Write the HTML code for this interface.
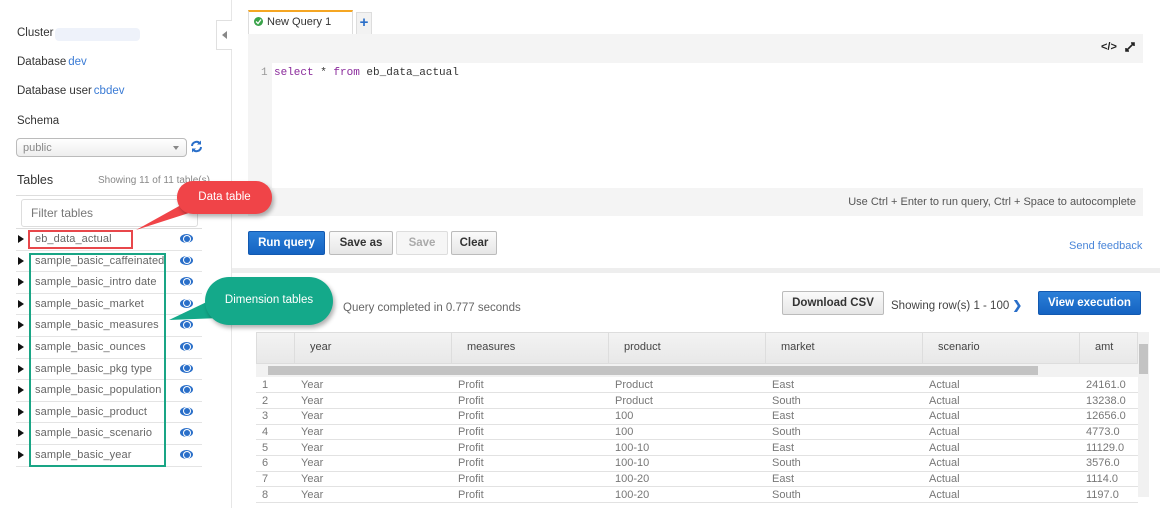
<!DOCTYPE html>
<html><head><meta charset="utf-8"><style>
*{box-sizing:border-box;margin:0;padding:0}
body{width:1160px;height:508px;overflow:hidden;background:#fff;font-family:"Liberation Sans",sans-serif;font-size:12px;color:#333;position:relative}
.a{position:absolute}
.lbl{font-size:11.5px;color:#333}
.lnk{color:#3a7bd5;margin-left:2px}
.row{position:absolute;left:16px;width:186px;height:21.6px;border-bottom:1px solid #e4e4e4}
.row .t{position:absolute;left:19px;top:4px;color:#666;font-size:11px;letter-spacing:0.1px}
.row .tri{position:absolute;left:2px;top:6px;width:0;height:0;border-left:6px solid #111;border-top:4.5px solid transparent;border-bottom:4.5px solid transparent}
.eye{position:absolute;left:164px;top:5px;width:13px;height:9px;border-radius:50%;background:#2a6fc9}
.eye:after{content:"";position:absolute;left:3.5px;top:1.5px;width:6px;height:6px;border-radius:50%;background:#2a6fc9;box-shadow:0 0 0 1px #fff}
.btn{position:absolute;height:24px;border:1px solid #bbb;border-radius:2px;background:linear-gradient(#fafafa,#e6e6e6);font-weight:bold;font-size:11.5px;text-align:center;line-height:22px;color:#333}
.blue{background:linear-gradient(#2b7fd8,#1563c2);border-color:#1259b0;color:#fff}
table{border-collapse:collapse;position:absolute;left:256px;top:377px;width:882px;font-size:11px;color:#777}
td{height:15.7px;border-bottom:1px solid #e2e2e2;padding:0 0 0 6px;white-space:nowrap;overflow:hidden}
.hc{position:absolute;top:332px;height:31px;border-right:1px solid #ddd;font-size:11px;color:#444;padding:9px 0 0 15px}
</style></head><body>
<div class="a lbl" style="left:17px;top:27px">Cluster</div>
<div class="a" style="left:55px;top:28px;width:85px;height:13px;background:#eef2fa;border-radius:4px"></div>
<div class="a lbl" style="left:17px;top:56px">Database<span class="lnk">dev</span></div>
<div class="a lbl" style="left:17px;top:85px">Database user<span class="lnk">cbdev</span></div>
<div class="a lbl" style="left:17px;top:115px">Schema</div>
<div class="a" style="left:16px;top:138px;width:171px;height:19px;border:1px solid #bbb;border-radius:4px;background:linear-gradient(#fff,#eee);color:#888;font-size:11px;padding:3px 0 0 6px">public<span style="position:absolute;right:7px;top:7px;border-top:4px solid #888;border-left:3px solid transparent;border-right:3px solid transparent"></span></div>
<svg class="a" style="left:190px;top:140px" width="13" height="13" viewBox="0 0 13 13"><path d="M2 6a4.5 4.5 0 0 1 8-2.5M11 7a4.5 4.5 0 0 1-8 2.5" stroke="#2a6fc9" stroke-width="2" fill="none"/><path d="M11 0.5v4h-4z M2 12.5v-4h4z" fill="#2a6fc9"/></svg>
<div class="a" style="left:17px;top:173px;font-size:12.5px">Tables</div>
<div class="a" style="left:98px;top:175px;font-size:10px;color:#888">Showing 11 of 11 table(s)</div>
<div class="a" style="left:16px;top:195px;width:186px;height:34px;border-top:1px solid #ddd;border-bottom:1px solid #ddd"></div>
<div class="a" style="left:21px;top:199px;width:177px;height:28px;border:1px solid #ddd;border-radius:3px;background:#fff;color:#777;padding:6px 0 0 9px;font-size:12px">Filter tables</div>
<div class="row" style="top:229px"><span class="tri"></span><span class="t">eb_data_actual</span><span class="eye"></span></div>
<div class="row" style="top:250.6px"><span class="tri"></span><span class="t">sample_basic_caffeinated</span><span class="eye"></span></div>
<div class="row" style="top:272.2px"><span class="tri"></span><span class="t">sample_basic_intro date</span><span class="eye"></span></div>
<div class="row" style="top:293.8px"><span class="tri"></span><span class="t">sample_basic_market</span><span class="eye"></span></div>
<div class="row" style="top:315.4px"><span class="tri"></span><span class="t">sample_basic_measures</span><span class="eye"></span></div>
<div class="row" style="top:337px"><span class="tri"></span><span class="t">sample_basic_ounces</span><span class="eye"></span></div>
<div class="row" style="top:358.6px"><span class="tri"></span><span class="t">sample_basic_pkg type</span><span class="eye"></span></div>
<div class="row" style="top:380.2px"><span class="tri"></span><span class="t">sample_basic_population</span><span class="eye"></span></div>
<div class="row" style="top:401.8px"><span class="tri"></span><span class="t">sample_basic_product</span><span class="eye"></span></div>
<div class="row" style="top:423.4px"><span class="tri"></span><span class="t">sample_basic_scenario</span><span class="eye"></span></div>
<div class="row" style="top:445px"><span class="tri"></span><span class="t">sample_basic_year</span><span class="eye"></span></div>
<div class="a" style="left:28px;top:230px;width:105px;height:19px;border:2px solid #e8474b"></div>
<div class="a" style="left:29px;top:253px;width:137px;height:214px;border:2px solid #19a585"></div>
<div class="a" style="left:231px;top:0;width:1px;height:508px;background:#e6e6e6"></div>
<div class="a" style="left:216px;top:20px;width:16px;height:30px;border:1px solid #e0e0e0;border-right:none;background:#fff"><span style="position:absolute;left:5px;top:10px;border-right:5px solid #888;border-top:4px solid transparent;border-bottom:4px solid transparent"></span></div>
<div class="a" style="left:248px;top:10px;width:105px;height:25px;border:1px solid #ddd;border-top:2px solid #f5a623;border-bottom:none;background:#fff;font-size:11px;padding:4px 0 0 18px">New Query 1</div>
<div class="a" style="left:254px;top:17px;width:9px;height:9px;border-radius:50%;background:#3aa34a"></div>
<svg class="a" style="left:255px;top:18px" width="7" height="7"><path d="M1 3.5l2 2 3-4" stroke="#fff" stroke-width="1.3" fill="none"/></svg>
<div class="a" style="left:356px;top:12px;width:16px;height:22px;border:1px solid #ddd;border-bottom:none;background:#f2f2f2;color:#2a6fc9;font-weight:bold;font-size:15px;text-align:center;line-height:20px">+</div>
<div class="a" style="left:248px;top:34px;width:895px;height:182px;background:#f4f4f4"></div>
<div class="a" style="left:272px;top:63px;width:871px;height:125px;background:#fff"></div>
<div class="a" style="left:1101px;top:41px;font-weight:bold;font-size:11px;color:#222">&lt;/&gt;</div>
<svg class="a" style="left:1125px;top:42px" width="10" height="10"><path d="M1 9L9 1M6 1h3v3M1 6v3h3" stroke="#222" stroke-width="1.6" fill="none"/></svg>
<div class="a" style="left:261px;top:67px;font-family:'Liberation Mono',monospace;font-size:11px;color:#999">1</div>
<div class="a" style="left:274px;top:67px;font-family:'Liberation Mono',monospace;font-size:11px;color:#333"><span style="color:#8a2a9b">select</span> * <span style="color:#8a2a9b">from</span> eb_data_actual</div>
<div class="a" style="right:24px;top:196px;font-size:11px;color:#555">Use Ctrl + Enter to run query, Ctrl + Space to autocomplete</div>
<div class="btn blue" style="left:248px;top:231px;width:77px">Run query</div>
<div class="btn" style="left:329px;top:231px;width:64px">Save as</div>
<div class="btn" style="left:396px;top:231px;width:52px;color:#aaa;background:#f6f6f6;border-color:#ddd">Save</div>
<div class="btn" style="left:451px;top:231px;width:46px">Clear</div>
<div class="a" style="left:1069px;top:240px;color:#4a86d9;font-size:11px">Send feedback</div>
<div class="a" style="left:232px;top:268px;width:928px;height:5px;background:#eee"></div>
<div class="a" style="left:343px;top:302px;color:#666;font-size:11.5px">Query completed in 0.777 seconds</div>
<div class="btn" style="left:782px;top:291px;width:102px;height:24px">Download CSV</div>
<div class="a" style="left:891px;top:298px;font-size:11.5px;color:#444">Showing row(s) 1 - 100 <b style="color:#2a6fc9">&#x276F;</b></div>
<div class="btn blue" style="left:1038px;top:291px;width:103px">View execution</div>
<div class="a" style="left:256px;top:332px;width:882px;height:32px;background:linear-gradient(#f3f3f3,#e8e8e8);border:1px solid #ddd"></div>
<div class="hc" style="left:256px;width:39px"></div>
<div class="hc" style="left:295px;width:157px">year</div>
<div class="hc" style="left:452px;width:157px">measures</div>
<div class="hc" style="left:609px;width:157px">product</div>
<div class="hc" style="left:766px;width:157px">market</div>
<div class="hc" style="left:923px;width:157px">scenario</div>
<div class="hc" style="left:1080px;width:58px;border:none">amt</div>
<div class="a" style="left:256px;top:364px;width:882px;height:13px;background:#f2f2f2"></div>
<div class="a" style="left:268px;top:366px;width:770px;height:9px;background:#c3c3c3"></div>
<div class="a" style="left:1138px;top:332px;width:11px;height:165px;background:#f1f1f1"></div>
<div class="a" style="left:1139px;top:344px;width:9px;height:30px;background:#c3c3c3"></div>
<table>
<colgroup><col style="width:39px"><col style="width:157px"><col style="width:157px"><col style="width:157px"><col style="width:157px"><col style="width:157px"><col style="width:58px"></colgroup>
<tr><td>1</td><td>Year</td><td>Profit</td><td>Product</td><td>East</td><td>Actual</td><td>24161.0</td></tr>
<tr><td>2</td><td>Year</td><td>Profit</td><td>Product</td><td>South</td><td>Actual</td><td>13238.0</td></tr>
<tr><td>3</td><td>Year</td><td>Profit</td><td>100</td><td>East</td><td>Actual</td><td>12656.0</td></tr>
<tr><td>4</td><td>Year</td><td>Profit</td><td>100</td><td>South</td><td>Actual</td><td>4773.0</td></tr>
<tr><td>5</td><td>Year</td><td>Profit</td><td>100-10</td><td>East</td><td>Actual</td><td>11129.0</td></tr>
<tr><td>6</td><td>Year</td><td>Profit</td><td>100-10</td><td>South</td><td>Actual</td><td>3576.0</td></tr>
<tr><td>7</td><td>Year</td><td>Profit</td><td>100-20</td><td>East</td><td>Actual</td><td>1114.0</td></tr>
<tr><td>8</td><td>Year</td><td>Profit</td><td>100-20</td><td>South</td><td>Actual</td><td>1197.0</td></tr>
</table>
<svg class="a" style="left:130px;top:178px" width="150" height="60"><path d="M6 52 L60 22 L62 34 Z" fill="#f04448"/></svg>
<div class="a" style="left:177px;top:181px;width:95px;height:33px;border-radius:16px;background:#f04448;color:#fff;font-size:11.5px;text-align:center;line-height:33px;box-shadow:2px 3px 4px rgba(0,0,0,.3)">Data table</div>
<svg class="a" style="left:165px;top:290px" width="80" height="40"><path d="M4 30 L50 8 L55 28 Z" fill="#14a98a"/></svg>
<div class="a" style="left:205px;top:277px;width:128px;height:48px;border-radius:24px;background:#14a98a;color:#fff;font-size:11.5px;text-align:center;line-height:46px;box-shadow:2px 3px 4px rgba(0,0,0,.3)">Dimension tables</div>
</body></html>
